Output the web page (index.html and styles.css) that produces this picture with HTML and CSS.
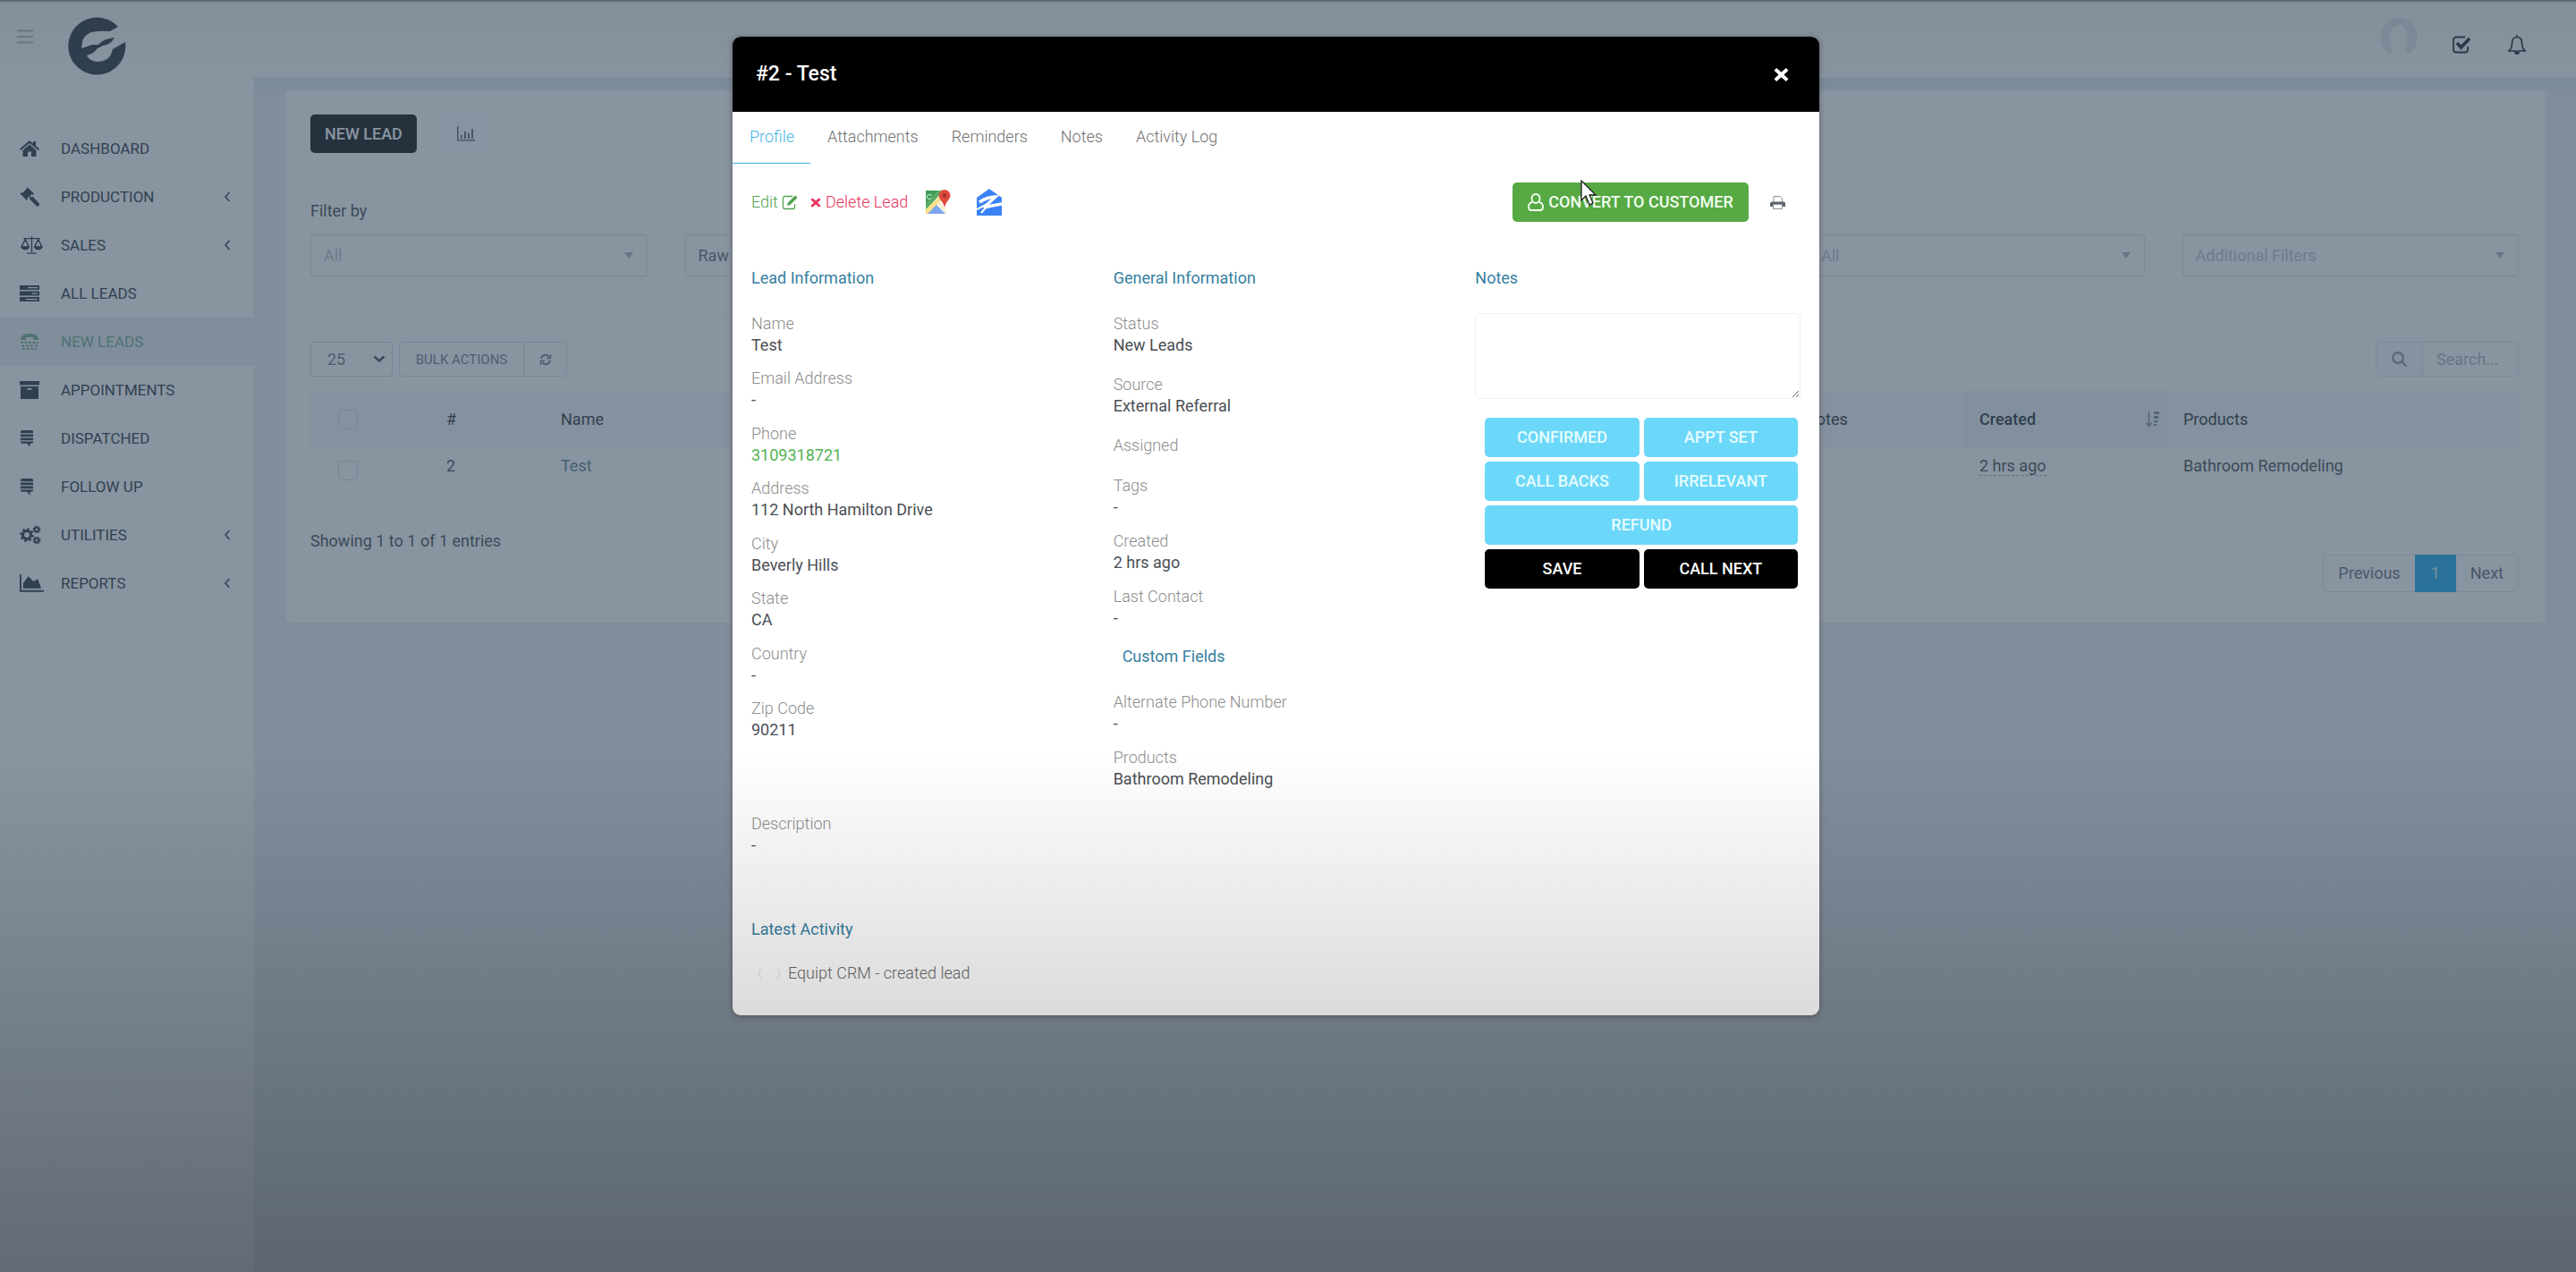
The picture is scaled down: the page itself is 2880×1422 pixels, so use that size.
FILE: index.html
```html
<!DOCTYPE html>
<html lang="en">
<head>
<meta charset="utf-8">
<title>Leads</title>
<link rel="stylesheet" href="styles.css">
</head>
<body>
<svg class="sprite" aria-hidden="true">
  <symbol id="i-times" viewBox="0 0 16 16"><path d="M3 1 8 5.300 13 1l2.500 2.500L10.800 8l4.700 4.500L13 15l-5-4.300L3 15 .500 12.500 5.200 8 .500 3.500z"/></symbol>
  <symbol id="i-left" viewBox="0 0 10 18"><path d="M7.500 4 3 9l4.500 5" fill="none" stroke="currentColor" stroke-width="1.500"/></symbol>
  <symbol id="i-layers" viewBox="0 0 18 22"><path d="M3 1h12a2 2 0 0 1 2 2v1.500H1V3a2 2 0 0 1 2-2zM1 6h16v3H1zM1 10.500h16v3H1zM1 15h16v.5a2 2 0 0 1-2 2h-2V22l-4-4.500H3a2 2 0 0 1-2-2z"/></symbol>
</svg>
<div class="app">
  <header class="topbar">
    <button class="plain menu" aria-label="Toggle menu"><svg width="18" height="16" viewBox="0 0 18 16"><path d="M0 1.500h18M0 8h18M0 14.500h18" stroke="currentColor" stroke-width="2"/></svg></button>
    <a href="#" class="logo" aria-label="Equipt CRM"><svg width="66" height="66" viewBox="0 0 66 66"><path d="M56 11 47 16Q36 15 26 17 17 21 16 28L15 35 27 31H34Q40 24 52 23 48 31 39 32L33 35Q29 41 21 43 24 49 32 50 44 50 48 42L50 36 64 28A32 32 0 1 1 56 11Z"/></svg></a>
    <div class="top-icons">
      <button class="plain avatar" aria-label="Account"><svg width="44" height="44" viewBox="0 0 44 44"><path d="M10 41C-2 32-2 10 13 3q9-5 18 0c15 7 15 29 3 38l-5-2c3-9 4-19 1-25-4-7-12-7-16 0-3 6-2 16 1 25z"/></svg></button>
      <button class="plain" aria-label="Tasks"><svg width="22" height="22" viewBox="0 0 22 22" fill="none" stroke="currentColor"><path d="M15 2.500H5A3 3 0 0 0 2 5.500v11a3 3 0 0 0 3 3h10a3 3 0 0 0 3-3V13" stroke-width="1.800"/><path d="m6 9 4.500 5L20 4" stroke-width="3.600"/></svg></button>
      <button class="plain" aria-label="Notifications"><svg width="24" height="24" viewBox="0 0 24 24"><path d="M12 3.500c-4 0-5.500 3-5.500 6.500 0 5-1.500 7.500-4 9h19c-2.500-1.500-4-4-4-9 0-3.500-1.500-6.500-5.500-6.500zM12 1v2.500" fill="none" stroke="currentColor" stroke-width="1.700" stroke-linejoin="round"/><path d="M9 20h6a3 3 0 0 1-6 0z"/></svg></button>
    </div>
  </header>
  <div class="shell">
    <nav class="sidebar">
      <a href="#"><svg viewBox="0 0 22 20"><path d="M11 1 0 10.500l1.300 1.500L11 4l9.700 8 1.300-1.500-4-3.500V2h-3v2.500zM11 5.500 3.500 12v7h5.500v-5.500h4V19h5.500v-7z"/></svg><span>DASHBOARD</span></a>
      <a href="#"><svg viewBox="0 0 22 22"><path d="M9 .5 16 7.500 14.500 9l-.9-.9-2 2 1.200 1.200 1.800-.6L21.500 18a2 2 0 0 1-3 3L11 13.500l.4-1.600-1.200-1.200-1.700 1.700.9.9L8 15 .5 7.500 2 6l.9.9L8.400 1.400 7.500 .5z"/></svg><span>PRODUCTION</span><svg class="chev"><use href="#i-left"/></svg></a>
      <a href="#"><svg class="wide" viewBox="0 0 28 24"><path d="M4 4h20M14 1v20M8 22h12M6 5 1.500 14h9zM22 5l-4.500 9h9z" fill="none" stroke="currentColor" stroke-width="1.500"/><path d="M1 14h10q-.5 4-5 4t-5-4zM17 14h10q-.5 4-5 4t-5-4z"/></svg><span>SALES</span><svg class="chev"><use href="#i-left"/></svg></a>
      <a href="#"><svg viewBox="0 0 22 20"><path fill-rule="evenodd" d="M0 1h22v5H0zM9 3v1.200h11V3zM0 7.500h22v5H0zM14 9.500v1.200h6V9.500zM0 14h22v5H0zM7 16v1.200h13V16z"/></svg><span>ALL LEADS</span></a>
      <a href="#" class="active"><svg viewBox="0 0 22 20"><path d="M1 8V6q2-5 10-5t10 5v2h-6V5H7v3zM1 10h3v2H1zm4.500 0h3v2h-3zm4.500 0h3v2h-3zm4.500 0h3v2h-3zm4.500 0h2v2h-2zM2 13.500h3v2H2zm5 0h3v2H7zm5 0h3v2h-3zm5 0h3v2h-3zM3 17h3v2H3zm5 0h3v2H8zm5 0h2v2h-2zm3.500 0h3v2h-3z"/></svg><span>NEW LEADS</span></a>
      <a href="#"><svg viewBox="0 0 22 20"><path fill-rule="evenodd" d="M0 0h22v4.500H0zM1 6h20v14H1zM8.500 8v1.800h5V8z"/></svg><span>APPOINTMENTS</span></a>
      <a href="#"><svg viewBox="0 0 22 22"><use href="#i-layers" width="16" height="20" y="1"/></svg><span>DISPATCHED</span></a>
      <a href="#"><svg viewBox="0 0 22 22"><use href="#i-layers" width="16" height="20" y="1"/></svg><span>FOLLOW UP</span></a>
      <a href="#"><svg class="gears" viewBox="0 0 24 22" fill="none" stroke="currentColor"><circle cx="8" cy="11" r="4.500" stroke-width="3"/><circle cx="8" cy="11" r="6.700" stroke-width="2.200" stroke-dasharray="2.600 2.660"/><circle cx="19" cy="5" r="2.300" stroke-width="2"/><circle cx="19" cy="5" r="3.800" stroke-width="1.400" stroke-dasharray="1.500 1.480"/><circle cx="19" cy="17" r="2.300" stroke-width="2"/><circle cx="19" cy="17" r="3.800" stroke-width="1.400" stroke-dasharray="1.500 1.480"/></svg><span>UTILITIES</span><svg class="chev"><use href="#i-left"/></svg></a>
      <a href="#"><svg class="wide" viewBox="0 0 28 20"><path d="M0 0h2v18h26v2H0zM4 16V10l6-8 6 6 5-3 4 11z"/></svg><span>REPORTS</span><svg class="chev"><use href="#i-left"/></svg></a>
    </nav>
    <main class="main">
      <section class="card">
        <div class="toolbar">
          <button class="btn dark">NEW LEAD</button>
          <button class="btn chart" aria-label="Leads summary"><svg width="20" height="17" viewBox="0 0 20 17"><path d="M0 0h1.500v15H20v1.500H0zM4 10h2v4H4zM8 6h2v8H8zM12 8h2v6h-2zM16 3h2v11h-2z"/></svg></button>
        </div>
        <div class="filter-label">Filter by</div>
        <div class="filters">
          <div class="pick"><select aria-label="Assigned"><option>All</option></select></div>
          <div class="pick set"><select aria-label="Status"><option>Raw</option></select></div>
          <div class="pick"><select aria-label="Source"><option>All</option></select></div>
          <div class="pick"><select aria-label="Tags"><option>All</option></select></div>
          <div class="pick"><select aria-label="Products"><option>All</option></select></div>
          <div class="pick"><select aria-label="Additional filters"><option>Additional Filters</option></select></div>
        </div>
        <hr>
        <div class="controls">
          <div class="length"><select aria-label="Entries per page"><option>25</option></select><svg width="14" height="9" viewBox="0 0 14 9"><path d="m1.500 1.500 5.500 5 5.500-5" fill="none" stroke="currentColor" stroke-width="2.600"/></svg></div>
          <div class="group"><button class="bulk">BULK ACTIONS</button><button aria-label="Reload"><svg width="14" height="14" viewBox="0 0 14 14" fill="none" stroke="currentColor" stroke-width="2"><path d="M2 6a5 5 0 0 1 9-2M12 8a5 5 0 0 1-9 2"/><path d="M12.500 1v4.500H8M1.500 13V8.500H6" stroke-width="1.500"/></svg></button></div>
          <div class="search"><label for="q" aria-label="Search"><svg width="19" height="19" viewBox="0 0 19 19" fill="none" stroke="currentColor" stroke-width="2.400"><circle cx="8" cy="8" r="5.800"/><path d="m12.500 12.500 5 5"/></svg></label><input id="q" type="search" placeholder="Search..."></div>
        </div>
        <table>
          <colgroup><col class="c-check"><col class="c-id"><col><col class="c-notes"><col class="c-created"><col class="c-products"></colgroup>
          <thead><tr><th class="tick"><input type="checkbox" aria-label="Select all"></th><th>#</th><th>Name</th><th>Notes</th><th class="sorted"><div class="sort">Created<svg width="16" height="18" viewBox="0 0 16 18"><path d="M3.500 0v15M.5 12.500l3 4 3-4" fill="none" stroke="currentColor" stroke-width="1.500"/><path d="M9 0h6v3H9zM9 5h5v3H9zM9 10h4v2H9zM9 14h3v2H9z"/></svg></div></th><th>Products</th></tr></thead>
          <tbody><tr><td class="tick"><input type="checkbox" aria-label="Select lead 2"></td><td>2</td><td><a href="#">Test</a></td><td></td><td><span class="ago">2 hrs ago</span></td><td>Bathroom Remodeling</td></tr></tbody>
        </table>
        <div class="foot">
          <div>Showing 1 to 1 of 1 entries</div>
          <div class="pages"><a href="#">Previous</a><a href="#" class="current">1</a><a href="#">Next</a></div>
        </div>
      </section>
    </main>
  </div>
</div>
<div class="backdrop">
  <div class="modal" role="dialog" aria-labelledby="title">
    <header class="modal-head"><h1 id="title">#2 - Test</h1><button class="plain" aria-label="Close"><svg width="17" height="17"><use href="#i-times"/></svg></button></header>
    <nav class="tabs"><a href="#" class="on">Profile</a><a href="#">Attachments</a><a href="#">Reminders</a><a href="#">Notes</a><a href="#">Activity Log</a></nav>
    <div class="modal-body">
      <div class="actions">
        <a href="#" class="edit">Edit<svg width="18" height="17" viewBox="0 0 18 17"><path d="M12 1.500H3.500a2 2 0 0 0-2 2v10a2 2 0 0 0 2 2h9a2 2 0 0 0 2-2V10" fill="none" stroke="currentColor" stroke-width="1.300"/><path d="m7 8.500 8-8L17.500 3l-8 8-3.500 1z"/></svg></a>
        <a href="#" class="delete"><svg width="12" height="13"><use href="#i-times"/></svg>Delete Lead</a>
        <a href="#" class="map" aria-label="Open map"><svg width="30" height="28" viewBox="0 0 30 28"><path d="M2 1h18L2 19z" fill="#3f9e58"/><path d="M2 15 16 1h6L2 23z" fill="#58ad66"/><path d="M2 22 21 4l2 5L5 27H2z" fill="#fbe08a"/><path d="M4 27 14 17 24 27z" fill="#7ea6ee"/><path d="m14 16 3-3 8 11v3z" fill="#f5edc8"/><path d="M23 0a6.500 6.500 0 0 1 6.500 6.500c0 4.500-5 6-6.500 14-1.500-8-6.500-9.500-6.500-14A6.500 6.500 0 0 1 23 0z" fill="#dd4b3e"/><circle cx="23" cy="6.500" r="2.400" fill="#a8352b"/><path d="M9 6H7a2.500 2.500 0 1 0 1 3" fill="none" stroke="#d8efdd"/></svg></a>
        <a href="#" aria-label="Open Zillow"><svg width="28" height="30" viewBox="0 0 28 30"><path d="M14 0 28 10v20H0V10z" fill="#3b82f6"/><path d="M3 15Q12 9 21 9L8 21q8-2 20-4" fill="none" stroke="#fff" stroke-width="3.400"/><path d="M0 23 12 17M5 27l6-7" stroke="#fff" stroke-width="2"/></svg></a>
        <div class="convert"><button class="btn green"><svg width="18" height="20" viewBox="0 0 18 20" fill="none" stroke="currentColor" stroke-width="1.900"><ellipse cx="9" cy="6" rx="4.500" ry="5"/><path d="M5 10Q1 11 1 15.500 1 19 4 19h10q3 0 3-3.500Q17 11 13 10"/></svg>CONVERT TO CUSTOMER</button>
        <svg class="cursor" width="19" height="30" viewBox="0 0 19 30"><path d="M1 1v22l5-5 4 10 4-2-4-9h7z" fill="#fff" stroke="#222" stroke-width="1.300"/></svg></div>
        <button class="plain print" aria-label="Print"><svg width="17" height="17" viewBox="0 0 17 17"><path d="M4 8V1.500h7l2.500 2.500V8" fill="#fff" stroke="#8a929b"/><path d="M2 7.500h13q2 0 2 2V13H0V9.500q0-2 2-2z" fill="#5c6570"/><path d="M3.500 10.500h10v5h-10z" fill="#fff" stroke="#8a929b"/></svg></button>
      </div>
      <div class="columns">
        <section>
          <h2>Lead Information</h2>
          <dl class="lead">
            <div><dt>Name</dt><dd>Test</dd></div>
            <div><dt>Email Address</dt><dd>-</dd></div>
            <div><dt>Phone</dt><dd><a href="tel:3109318721">3109318721</a></dd></div>
            <div><dt>Address</dt><dd>112 North Hamilton Drive</dd></div>
            <div><dt>City</dt><dd>Beverly Hills</dd></div>
            <div><dt>State</dt><dd>CA</dd></div>
            <div><dt>Country</dt><dd>-</dd></div>
            <div><dt>Zip Code</dt><dd>90211</dd></div>
          </dl>
        </section>
        <section>
          <h2>General Information</h2>
          <dl class="loose">
            <div><dt>Status</dt><dd>New Leads</dd></div>
            <div><dt>Source</dt><dd>External Referral</dd></div>
            <div><dt>Assigned</dt></div>
          </dl>
          <dl class="general">
            <div><dt>Tags</dt><dd>-</dd></div>
            <div><dt>Created</dt><dd>2 hrs ago</dd></div>
            <div><dt>Last Contact</dt><dd>-</dd></div>
          </dl>
          <h2 class="sub">Custom Fields</h2>
          <dl class="general">
            <div><dt>Alternate Phone Number</dt><dd>-</dd></div>
            <div><dt>Products</dt><dd>Bathroom Remodeling</dd></div>
          </dl>
        </section>
        <section>
          <h2><label for="notes">Notes</label></h2>
          <textarea id="notes"></textarea>
          <div class="moves">
            <button class="btn sky">CONFIRMED</button><button class="btn sky">APPT SET</button>
            <button class="btn sky">CALL BACKS</button><button class="btn sky">IRRELEVANT</button>
            <button class="btn sky full">REFUND</button>
            <button class="btn black">SAVE</button><button class="btn black">CALL NEXT</button>
          </div>
        </section>
      </div>
      <dl class="description"><div><dt>Description</dt><dd>-</dd></div></dl>
      <h2>Latest Activity</h2>
      <p class="activity"><span class="dot"></span>Equipt CRM - created lead</p>
    </div>
  </div>
</div>
<div class="shade"></div>
</body>
</html>
```
FILE: styles.css
```css
* { box-sizing: border-box; }
body { margin: 0; font: 400 18px/24px Roboto, "Liberation Sans", sans-serif; color: #3a3f45; background: #e9eef3; }
a { color: inherit; text-decoration: none; }
button, select, input, textarea { font: inherit; color: inherit; }
h1, h2, p, dl, dd { margin: 0; }
svg { flex: none; }
svg:not([fill]) { fill: currentColor; }
.sprite { position: absolute; width: 0; height: 0; }
.plain { display: flex; padding: 0; border: 0; background: none; }

.app { display: flex; flex-direction: column; min-height: 100vh; }
.topbar { display: flex; align-items: center; height: 87px; padding: 0 54px 0 19px; background: #fff; border-top: 2px solid #9a9a9a; }
.menu { width: 57px; color: #b4b4b4; align-self: flex-start; margin-top: 31px; }
.logo { display: flex; margin-top: 14px; color: #1d2530; }
.top-icons { display: flex; align-items: center; gap: 39px; margin-left: auto; margin-top: 10px; color: #10161c; }
.avatar { color: #e4e9ee; margin-top: -18px; margin-right: -2px; }
.shell { display: flex; flex: 1; }
.sidebar { width: 284px; padding-top: 52px; background: #fff; color: #202833; flex: none; }
.sidebar a { display: flex; align-items: center; height: 54px; padding: 0 25px 0 22px; font-size: 17px; }
.sidebar svg { width: 22px; height: 22px; margin-right: 24px; }
.sidebar .wide { width: 27px; margin-right: 19px; }
.sidebar .gears { width: 24px; margin-right: 22px; }
.sidebar .chev { width: 10px; height: 18px; margin: 0 0 0 auto; }
.sidebar .active { background: #e9eef3; color: #69aa88; }

.main { flex: 1; min-width: 0; padding: 14px 34px 40px 36px; background: linear-gradient(#dce3ea, #e9eef3 20px); }
.card { padding: 27px 30px 34px 27px; background: #fff; border-radius: 6px; }
.toolbar { display: flex; gap: 29px; height: 43px; }
.btn { display: flex; align-items: center; justify-content: center; gap: 5px; padding: 0 16px; border: 0; border-radius: 5px; font-weight: 500; }
.dark { background: #000; color: #fff; }
.chart { width: 52px; background: #fafbff; color: #5a6370; }
.filter-label { margin: 53px 0 14px; }
.filters { display: grid; grid-template-columns: repeat(6, 1fr); gap: 42px; }
.pick, .length { display: grid; align-items: center; }
.pick select, .length select { grid-area: 1 / 1; width: 100%; height: 47px; padding: 0 14px; appearance: none; border: 1px solid #dbe0e6; border-radius: 3px; background: none; color: #b9bfc9; }
.pick::after { content: ""; grid-area: 1 / 1; justify-self: end; margin-right: 16px; border: 5px solid transparent; border-top: 7px solid #a9b0ba; border-bottom: 0; }
.pick.set select { color: #5a6370; }
hr { margin: 45px -14px 27px; border: 0; border-top: 1px solid #f3f5f8; }
.controls { display: flex; gap: 7px; height: 39px; color: #6b7480; }
.length { width: 92px; }
.length select { height: 39px; padding: 0 18px; color: inherit; border-color: #d0d6dd; }
.length svg { grid-area: 1 / 1; justify-self: end; margin-right: 8px; color: #3c444f; }
.group { display: flex; }
.group button { width: 49px; border: 1px solid #d7dce3; background: none; border-radius: 0 4px 4px 0; display: flex; align-items: center; justify-content: center; }
.group .bulk { width: 140px; margin-right: -1px; border-radius: 4px 0 0 4px; font-size: 15px; }
.search { display: flex; width: 160px; margin-left: auto; border: 1px solid #dbe0e6; border-radius: 4px; }
.search label { display: flex; align-items: center; justify-content: center; width: 52px; background: #f9faff; border-right: 1px solid #dbe0e6; color: #8a919c; }
.search input { flex: 1; min-width: 0; border: 0; padding: 0 0 0 15px; background: none; }
.search input::placeholder { color: #a9b0ba; opacity: 1; }
table { width: 100%; margin-top: 16px; border-collapse: collapse; table-layout: fixed; }
.c-check { width: 136px; } .c-id { width: 128px; } .c-notes { width: 195px; } .c-created { width: 228px; } .c-products { width: 391px; }
th, td { padding: 0 16px; text-align: left; font-weight: 400; }
th { height: 64px; background: #f6f8fb; color: #20242c; }
th.sorted { background: #f0f4f9; font-weight: 500; }
td { padding: 8px 16px 25px; vertical-align: top; }
td a { color: #4c7a80; }
.tick { padding-left: 31px; }
.tick input { display: block; appearance: none; width: 22px; height: 22px; margin: 0; border: 1px solid #d3d8df; border-radius: 4px; }
td.tick { padding-top: 14px; }
.sort { display: flex; justify-content: space-between; align-items: center; margin-right: -6px; }
.sort svg { color: #7f8792; }
.ago { border-bottom: 1px dashed #9299a3; }
.foot { display: flex; justify-content: space-between; align-items: flex-start; margin-top: 31px; }
.pages { display: flex; height: 42px; margin-top: 27px; border: 1px solid #dfe4ea; border-radius: 4px; line-height: 40px; color: #5a6370; }
.pages a { padding: 0 16px; }
.pages .current { margin: -1px 0; padding: 1px 18px; background: #0fa8ee; color: #cfeafa; }

.backdrop { position: absolute; inset: 0; display: flex; align-items: flex-start; justify-content: center; padding: 41px 27px 0 0; background: rgba(61, 80, 100, .61); }
.modal { width: 1215px; background: #fff; border-radius: 9px; overflow: hidden; box-shadow: 0 1px 6px rgba(60, 50, 50, .5); }
.modal-head { display: flex; align-items: center; justify-content: space-between; height: 84px; padding: 0 34px 0 26px; background: #000; color: #fff; }
h1 { font-size: 23px; font-weight: 500; }
.tabs { display: flex; color: #707070; font-weight: 300; }
.tabs a { padding: 16px 18px 17px 19px; border-bottom: 1px solid transparent; }
.tabs .on { border-color: #3ab0dd; color: #45b4e8; }
.modal-body { padding: 21px 21px 35px; }
.actions { display: flex; align-items: center; height: 44px; margin-bottom: 51px; font-weight: 300; }
.actions a { display: flex; align-items: center; }
.edit { gap: 4px; color: #51a351; margin-right: 14px; }
.delete { gap: 5px; color: #e8365c; margin-right: 18px; }
.map { margin-right: 29px; }
.convert { position: relative; display: flex; margin-left: auto; height: 44px; }
.green { width: 264px; background: #57a944; color: #f2fff0; }
.cursor { position: absolute; left: 76px; top: -3px; }
.print { margin: 0 17px 0 24px; }
h2 { font-size: 18px; font-weight: 400; color: #35809f; margin-bottom: 27px; }
.columns { display: grid; grid-template-columns: repeat(3, 1fr); gap: 41px; }
dt { color: #8c8c8c; font-weight: 300; }
dd { color: #4a4e53; }
dd a { color: #52b152; }
.lead, .general { display: grid; row-gap: 14px; }
.lead div:nth-child(even) { margin-top: -1px; }
.loose { display: grid; row-gap: 20px; margin-bottom: 21px; }
.sub { margin: 19px 0 27px 10px; }
textarea { display: block; width: 100%; height: 96px; border: 1px solid #efefef; border-radius: 5px; }
.moves { display: grid; grid-template-columns: 1fr 1fr; gap: 5px; padding: 21px 3px 0 11px; }
.moves .btn { height: 44px; }
.sky { background: #6cd8f9; color: #e6fcff; }
.black { background: #000; color: #fff; }
.full { grid-column: 1 / 3; }
.description { margin: 26px 0 70px; }
.modal-body > h2 { margin-bottom: 25px; }
.activity { display: flex; align-items: center; gap: 9px; padding-left: 8px; color: #6a6a6a; font-weight: 300; }
.dot { width: 24px; height: 18px; border: 1px solid transparent; border-left-color: #dbe3ec; border-right-color: #dbe3ec; border-radius: 12px; }
.shade { position: absolute; inset: 0; pointer-events: none; background: linear-gradient(rgba(0, 0, 0, .04), transparent 7%, transparent 59%, rgba(0, 0, 0, .28)); }
```
